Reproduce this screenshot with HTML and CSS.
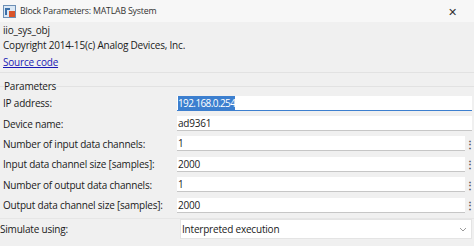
FILE: index.html
```html
<!DOCTYPE html>
<html lang="en">
<head>
    <meta charset="UTF-8">
    <title>Block Parameters: MATLAB System</title>
    <link rel="stylesheet" href="styles.css">
</head>
<body>
    <div class="dialog">
        <div class="titlebar">
            <svg class="app-icon" width="13" height="13" viewBox="0 0 13 13">
                <rect x="0.5" y="0.5" width="12" height="12" fill="#dbe8f5" stroke="#6d8fb5"/>
                <path d="M2 3 L7 3 L7 5 L4 5 L4 10 L2 10 Z" fill="#3b6fa8"/>
                <rect x="6" y="6" width="6" height="6" fill="#d9542b"/>
            </svg>
            <span class="title">Block Parameters: MATLAB System</span>
            <span class="close">&#x2715;</span>
        </div>
        <div class="desc">
            <div>iio_sys_obj</div>
            <div>Copyright 2014-15(c) Analog Devices, Inc.</div>
            <div class="src"><a href="#" class="link">Source code</a></div>
        </div>
        <fieldset class="params">
            <legend>Parameters</legend>
            <div class="row">
                <label>IP address:</label>
                <div class="field focused"><span class="sel">192.168.0.254</span></div>
            </div>
            <div class="row">
                <label>Device name:</label>
                <div class="field">ad9361</div>
            </div>
            <div class="row">
                <label>Number of input data channels:</label>
                <div class="field">1</div>
                <span class="more">&#x22EE;</span>
            </div>
            <div class="row">
                <label>Input data channel size [samples]:</label>
                <div class="field">2000</div>
                <span class="more">&#x22EE;</span>
            </div>
            <div class="row">
                <label>Number of output data channels:</label>
                <div class="field">1</div>
                <span class="more">&#x22EE;</span>
            </div>
            <div class="row">
                <label>Output data channel size [samples]:</label>
                <div class="field">2000</div>
                <span class="more">&#x22EE;</span>
            </div>
        </fieldset>
        <div class="sim-row">
            <label>Simulate using:</label>
            <div class="dropdown">
                <span>Interpreted execution</span>
                <svg width="8" height="5" viewBox="0 0 8 5"><path d="M1 1 L4 4 L7 1" fill="none" stroke="#9a9a9a" stroke-width="1"/></svg>
            </div>
        </div>
    </div>
</body>
</html>
```

FILE: styles.css
```css
body {
    margin: 0;
    font-family: 'Open Sans', 'Noto Sans', sans-serif;
    font-size: 10px;
    letter-spacing: -0.2px;
    color: #1a1a1a;
    background: #f0f0f0;
    overflow: hidden;
}
.dialog {
    width: 474px;
    height: 246px;
    background: #f0f0f0;
}
.titlebar {
    height: 22px;
    display: flex;
    align-items: center;
    padding-left: 3px;
    padding-right: 17px;
    background: #f7f7f7;
    box-sizing: border-box;
}
.app-icon {
    margin-right: 4px;
}
.title {
    font-size: 8.8px;
    color: #333;
    flex: 1;
}
.close {
    font-size: 11px;
    color: #333;
}
.desc {
    padding: 1px 3px 3px;
    height: 51px;
    box-sizing: border-box;
    border-bottom: 1px solid #e2e2e2;
    line-height: 15px;
}
.desc div {
    height: 15px;
}
.desc .src {
    margin-top: 2px;
}
.link {
    color: #1a1ab4;
}
.params {
    margin: 6px 0 0;
    padding: 0 2px 3px 3px;
    border: none;
    border-top: 1px solid #e2e2e2;
    border-bottom: 1px solid #e6e6e6;
}
.params legend {
    padding: 0;
    margin-left: 1px;
    line-height: 14px;
}
.row {
    display: flex;
    align-items: center;
    height: 20.4px;
}
.row label {
    width: 174px;
    flex: none;
    white-space: nowrap;
}
.field {
    flex: 1;
    height: 14px;
    line-height: 14px;
    background: #fff;
    border-bottom: 1px solid #c6c6c6;
    padding-left: 1px;
    white-space: nowrap;
}
.field.focused {
    border-bottom: 1px solid #3c7fcf;
}
.sel {
    background: #3c7fcf;
    color: #fff;
    letter-spacing: -0.6px;
}
.more {
    width: 7px;
    text-align: right;
    font-weight: bold;
    color: #555;
    font-size: 10px;
}
.sim-row {
    display: flex;
    align-items: center;
}
.sim-row label {
    width: 180px;
    flex: none;
}
.dropdown {
    flex: 1;
    height: 20px;
    margin-right: 2px;
    background: #fff;
    border: 1px solid #e4e4e4;
    box-sizing: border-box;
    display: flex;
    align-items: center;
    justify-content: space-between;
    padding: 0 4px 0 1px;
}
```
